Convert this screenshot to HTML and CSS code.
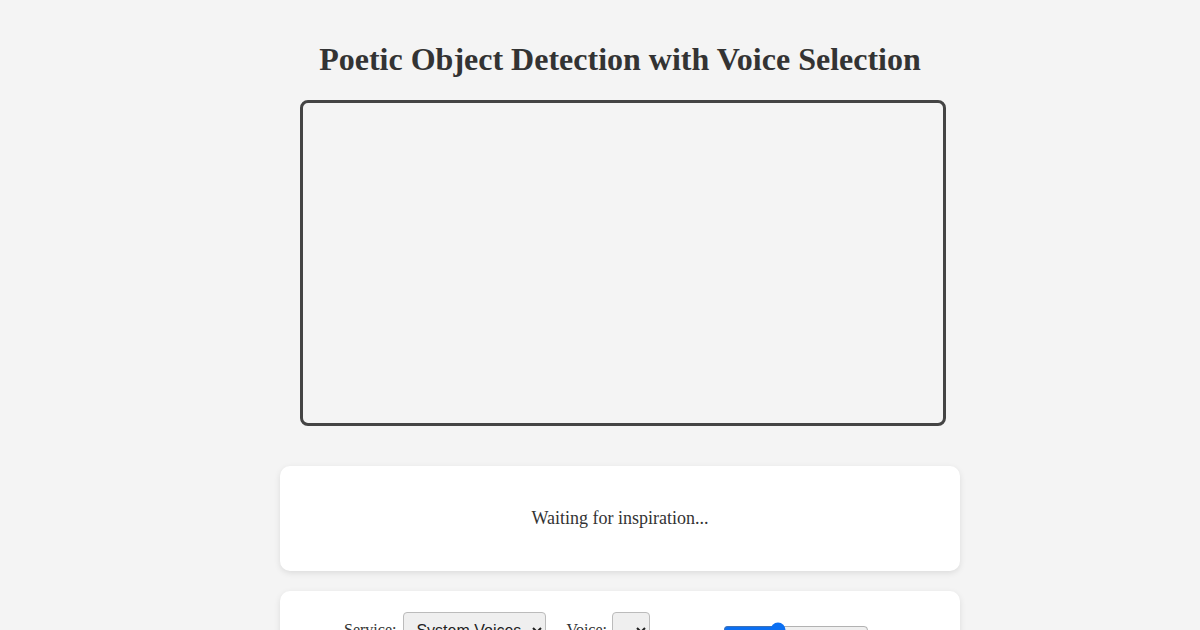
FILE: index.html
```html
<!DOCTYPE html>
<html>
<head>
<meta charset="utf-8">
<title>Poetic Object Detection</title>
<link rel="stylesheet" href="styles.css">
</head>
<body>
<div class="page">
  <h1 class="title">Poetic Object Detection with Voice Selection</h1>
  <div class="stage"><canvas class="canvas" width="640" height="320"></canvas></div>
  <div class="card poem">
    <p class="poem-text">Waiting for inspiration...</p>
  </div>
  <div class="card controls">
    <div class="row">
      <label class="ctl-label service-label">Service:</label>
      <select class="ctl-select first"><option>System Voices</option></select>
      <label class="ctl-label voice-label">Voice:</label>
      <select class="ctl-select empty"></select>
      <input class="ctl-range" type="range" min="0" max="100" value="36">
    </div>
  </div>
</div>
</body>
</html>
```
FILE: styles.css
```css
html, body {
  margin: 0;
  padding: 0;
  background: #f4f4f4;
}
body {
  font-family: "Liberation Serif", "Times New Roman", serif;
  color: #333;
  overflow: hidden;
}
.page {
  padding-left: 40px;
  display: flex;
  flex-direction: column;
  align-items: center;
}
.title {
  margin: 41px 0 0 0;
  font-size: 32px;
  line-height: 37px;
  font-weight: bold;
  color: #333;
}
.stage {
  margin-top: 22px;
  margin-left: 6px;
  display: flex;
}
.canvas {
  display: block;
  width: 640px;
  height: 320px;
  border: 3px solid #444;
  border-radius: 8px;
}
.card {
  width: 680px;
  background: #fff;
  border-radius: 10px;
  box-shadow: 0 2px 6px rgba(0, 0, 0, 0.1);
  box-sizing: border-box;
}
.poem {
  margin-top: 40px;
  height: 105px;
  display: flex;
  align-items: center;
  justify-content: center;
}
.poem-text {
  margin: 0;
  font-size: 18px;
  color: #333;
}
.controls {
  margin-top: 20px;
  padding: 21px 20px 20px 64px;
}
.row {
  display: flex;
  align-items: center;
}
.ctl-label {
  font-size: 16px;
  color: #333;
  flex: none;
}
.service-label {
  margin-right: 7px;
}
.voice-label {
  margin-left: 20px;
  margin-right: 5px;
}
.ctl-select {
  font-family: "Liberation Sans", Arial, sans-serif;
  font-size: 16px;
  color: #222;
  height: 36px;
  padding: 0 6px 0 8px;
  border: 1px solid #bbb;
  border-radius: 4px;
  background: #efefef;
  flex: none;
}
.ctl-select.first {
  width: 143px;
}
.ctl-select.empty {
  width: 38px;
}
.ctl-range {
  width: 146px;
  margin: 0 0 0 73px;
  accent-color: #0b6ff2;
  flex: none;
}
```
